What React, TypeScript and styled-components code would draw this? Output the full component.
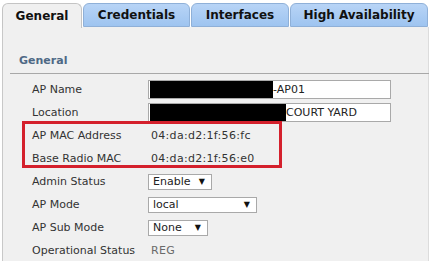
import styled, { createGlobalStyle } from 'styled-components';

const GlobalStyle = createGlobalStyle`
  html, body {
    margin: 0;
    padding: 0;
    background: #ffffff;
  }
  body {
    font-family: 'DejaVu Sans', Verdana, sans-serif;
    color: #333333;
  }
`;

interface TabProps {
  active?: boolean;
  w: number;
}

interface FieldProps {
  w: number;
}

const tabs = [
  { label: 'General', w: 80, active: true },
  { label: 'Credentials', w: 107 },
  { label: 'Interfaces', w: 98 },
  { label: 'High Availability', w: 138 },
];

const Page = styled.div`
  width: 431px;
  height: 261px;
  overflow: hidden;
`;

const TabBar = styled.div`
  display: flex;
  gap: 1px;
  padding: 3px 0 0 2px;
  height: 24px;
`;

const Tab = styled.div<TabProps>`
  width: ${({ w }) => w}px;
  box-sizing: border-box;
  display: flex;
  align-items: center;
  justify-content: center;
  font-size: 12px;
  font-weight: 700;
  color: #111;
  white-space: nowrap;
  border: 1px solid ${({ active }) => (active ? '#c4c4c4' : '#8fb0d8')};
  border-bottom: ${({ active }) => (active ? 'none' : '1px solid #8fb0d8')};
  border-radius: 6px 6px 0 0;
  background: ${({ active }) =>
    active ? '#f0f0f0' : 'linear-gradient(#b8d4f6, #9ec4f0)'};
  height: ${({ active }) => (active ? 25 : 24)}px;
`;

const Panel = styled.div`
  margin-left: 2px;
  width: 427px;
  height: 240px;
  box-sizing: border-box;
  background: #f0f0f0;
  border-left: 1px solid #c8c8c8;
  border-right: 1px solid #dcdcdc;
  padding-top: 27px;
`;

const Section = styled.div`
  font-size: 11px;
  font-weight: 700;
  color: #4e6985;
  padding: 0 0 5px 9px;
  border-bottom: 1px solid #a8a8a8;
  margin-left: 7px;
  margin-right: -1px;
  line-height: 14px;
`;

const Form = styled.div`
  position: relative;
  padding-top: 4px;
`;

const Row = styled.div`
  display: grid;
  grid-template-columns: 116px 1fr;
  align-items: center;
  height: 23px;
  padding-left: 29px;
  font-size: 11px;
`;

const Label = styled.span`
  color: #333;
`;

const Value = styled.span<{ muted?: boolean }>`
  padding-left: 3px;
  letter-spacing: 0.3px;
  color: ${({ muted }) => (muted ? '#6a6a6a' : '#333')};
`;

const TextField = styled.div<FieldProps>`
  width: ${({ w }) => w}px;
  height: 19px;
  box-sizing: border-box;
  background: #fff;
  border: 1px solid #a9a9a9;
  display: flex;
  align-items: center;
  font-size: 11px;
  color: #222;
`;

const Redacted = styled.span<FieldProps>`
  display: inline-block;
  width: ${({ w }) => w}px;
  height: 17px;
  background: #000;
  margin-left: 1px;
`;

const Select = styled.div<FieldProps>`
  width: ${({ w }) => w}px;
  height: 16px;
  box-sizing: border-box;
  background: #fff;
  border: 1px solid #a9a9a9;
  display: flex;
  align-items: center;
  justify-content: space-between;
  padding: 0 6px 0 4px;
  font-size: 11px;
  color: #222;
`;

const Arrow = styled.span`
  font-size: 8px;
  color: #111;
`;

const Highlight = styled.div`
  position: absolute;
  left: 19px;
  top: 47px;
  width: 254px;
  height: 41px;
  border: 3px solid #d4202c;
  pointer-events: none;
`;

export default function App() {
  return (
    <Page>
      <GlobalStyle />
      <TabBar>
        {tabs.map(t => (
          <Tab key={t.label} w={t.w} active={t.active}>
            {t.label}
          </Tab>
        ))}
      </TabBar>
      <Panel>
        <Section>General</Section>
        <Form>
          <Row>
            <Label>AP Name</Label>
            <TextField w={243}>
              <Redacted w={123} />
              -AP01
            </TextField>
          </Row>
          <Row>
            <Label>Location</Label>
            <TextField w={243}>
              <Redacted w={136} />
              COURT YARD
            </TextField>
          </Row>
          <Row>
            <Label>AP MAC Address</Label>
            <Value>04:da:d2:1f:56:fc</Value>
          </Row>
          <Row>
            <Label>Base Radio MAC</Label>
            <Value>04:da:d2:1f:56:e0</Value>
          </Row>
          <Row>
            <Label>Admin Status</Label>
            <Select w={64}>
              Enable <Arrow>▼</Arrow>
            </Select>
          </Row>
          <Row>
            <Label>AP Mode</Label>
            <Select w={109}>
              local <Arrow>▼</Arrow>
            </Select>
          </Row>
          <Row>
            <Label>AP Sub Mode</Label>
            <Select w={60}>
              None <Arrow>▼</Arrow>
            </Select>
          </Row>
          <Row>
            <Label>Operational Status</Label>
            <Value muted>REG</Value>
          </Row>
          <Highlight />
        </Form>
      </Panel>
    </Page>
  );
}
